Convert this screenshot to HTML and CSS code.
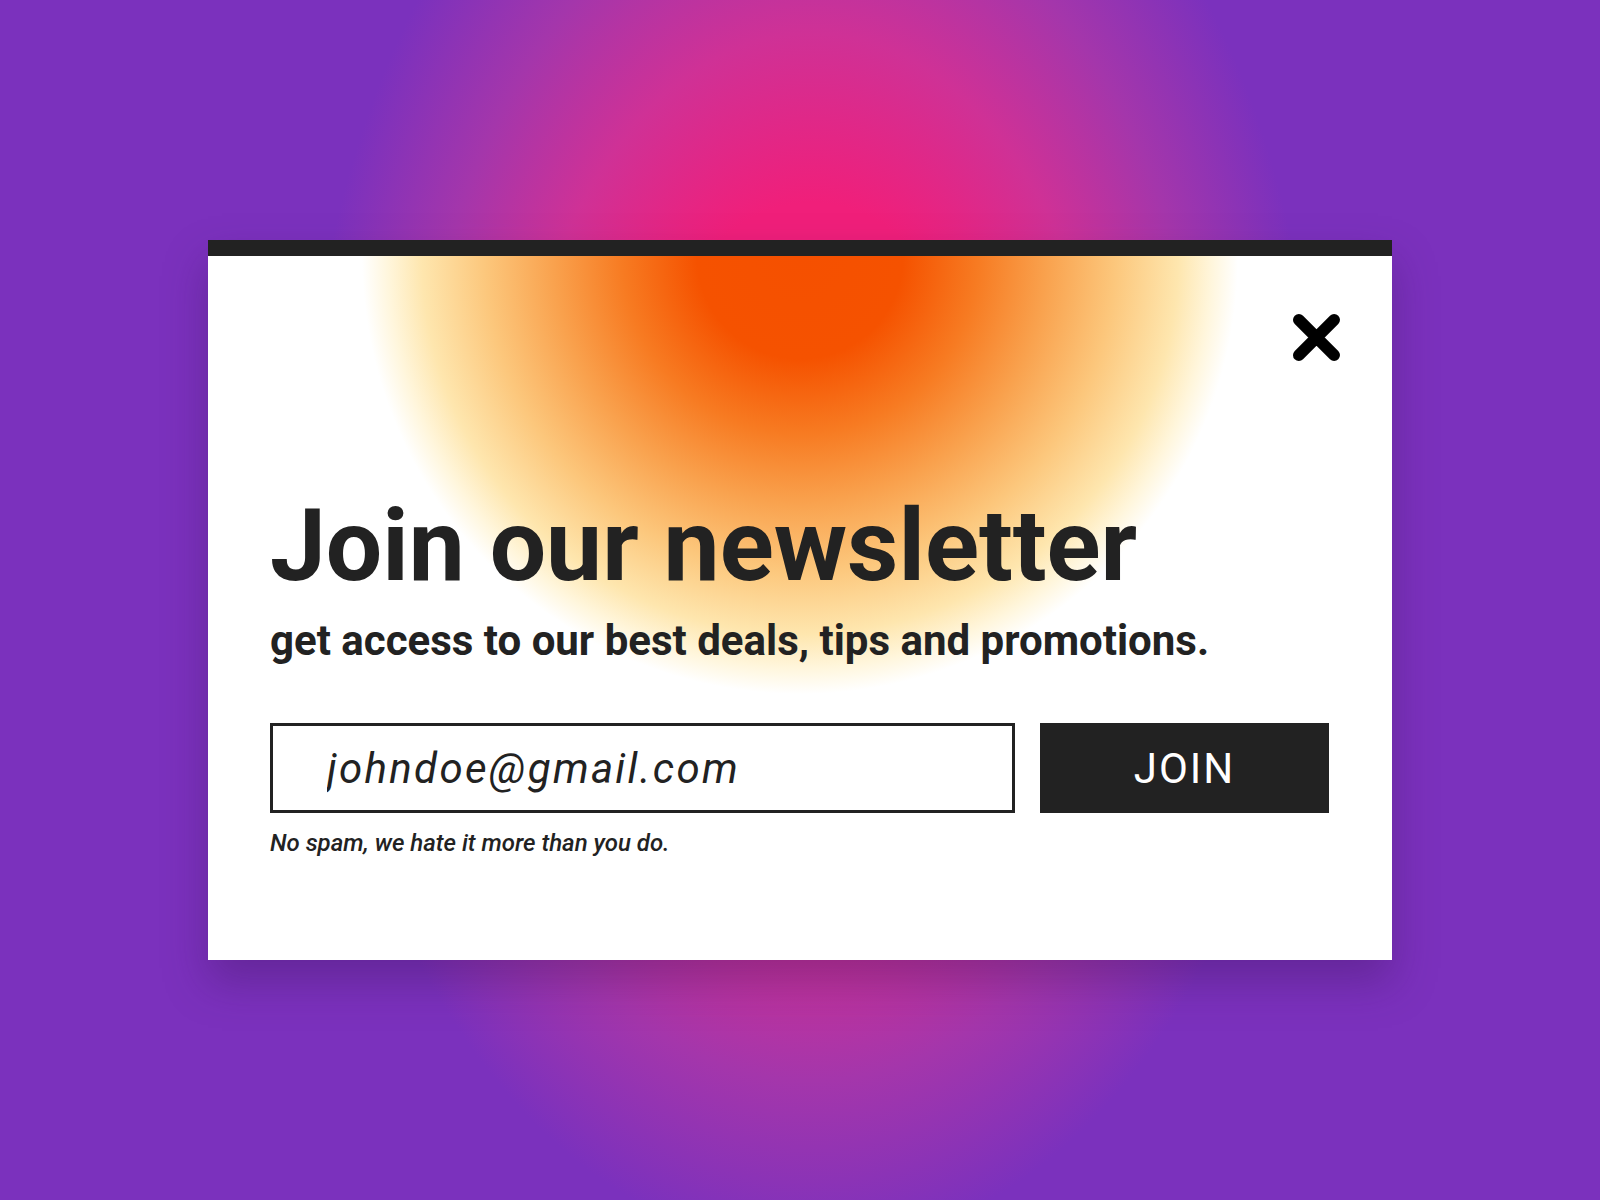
FILE: index.html
```html
<!DOCTYPE html>
<html lang="en">
<head>
<meta charset="utf-8">
<title>Join our newsletter</title>
<link rel="stylesheet" href="styles.css">
</head>
<body>
<main class="stage">
  <section class="modal">
    <button class="close" type="button" aria-label="Close">
      <svg viewBox="0 0 48 48" width="48" height="48" aria-hidden="true">
        <path d="M6 6 L42 42 M42 6 L6 42" fill="none" stroke="#000" stroke-width="12" stroke-linecap="round"/>
      </svg>
    </button>
    <h1 class="title">Join our newsletter</h1>
    <p class="subtitle">get access to our best deals, tips and promotions.</p>
    <form class="signup">
      <input class="email" type="email" value="johndoe@gmail.com">
      <button class="join" type="button">JOIN</button>
    </form>
    <p class="note">No spam, we hate it more than you do.</p>
  </section>
</main>
</body>
</html>
```

FILE: styles.css
```css
* { box-sizing: border-box; }

html, body {
  margin: 0;
  padding: 0;
  width: 1600px;
  height: 1200px;
  overflow: hidden;
}

body {
  font-family: Roboto, "Liberation Sans", sans-serif;
  color: #222;
  background-color: #7b31bd;
  background-image: radial-gradient(ellipse 505px 770px at 812px 480px, #f01f7a 0%, #f01f7a 36%, #cf3196 58%, #a436ab 78%, #7b31bd 100%);
}

.stage {
  width: 1600px;
  height: 1200px;
  display: flex;
  align-items: center;
  justify-content: center;
}

.modal {
  position: relative;
  width: 1184px;
  height: 720px;
  border-top: 16px solid #222;
  background-color: #fff;
  background-image: radial-gradient(circle 438px at 50% 0, #f55000 0px, #f55200 103px, #f77b22 178px, #f9a24e 247px, #fcc77c 315px, #fee6ae 378px, #fff6dc 412px, #ffffff 438px);
  box-shadow: 0 22px 40px rgba(60, 20, 90, 0.35);
  padding: 240px 62px 0 62px;
}

.close {
  position: absolute;
  top: 58px;
  right: 52px;
  width: 47px;
  height: 47px;
  padding: 0;
  border: 0;
  background: none;
  cursor: pointer;
}

.close svg {
  display: block;
  width: 47px;
  height: 47px;
}

.title {
  margin: 0;
  font-size: 100px;
  line-height: 1;
  font-weight: 700;
  letter-spacing: 0;
}

.subtitle {
  margin: 24px 0 0 0;
  font-size: 42px;
  line-height: 1;
  font-weight: 700;
}

.signup {
  margin: 61px 0 0 0;
  display: flex;
  gap: 25px;
}

.email {
  width: 745px;
  height: 90px;
  border: 3px solid #222;
  border-radius: 0;
  padding: 0 0 0 54px;
  font-family: Roboto, "Liberation Sans", sans-serif;
  font-style: italic;
  font-weight: 400;
  font-size: 42px;
  letter-spacing: 2.3px;
  color: #222;
  background: #fff;
  outline: none;
}

.join {
  width: 289px;
  height: 90px;
  border: 0;
  border-radius: 0;
  background: #222;
  color: #fff;
  font-family: Roboto, "Liberation Sans", sans-serif;
  font-size: 42px;
  font-weight: 400;
  letter-spacing: 2px;
  padding: 0;
  cursor: pointer;
}

.note {
  margin: 18px 0 0 0;
  font-size: 24px;
  line-height: 1;
  font-style: italic;
  font-weight: 500;
}
```
